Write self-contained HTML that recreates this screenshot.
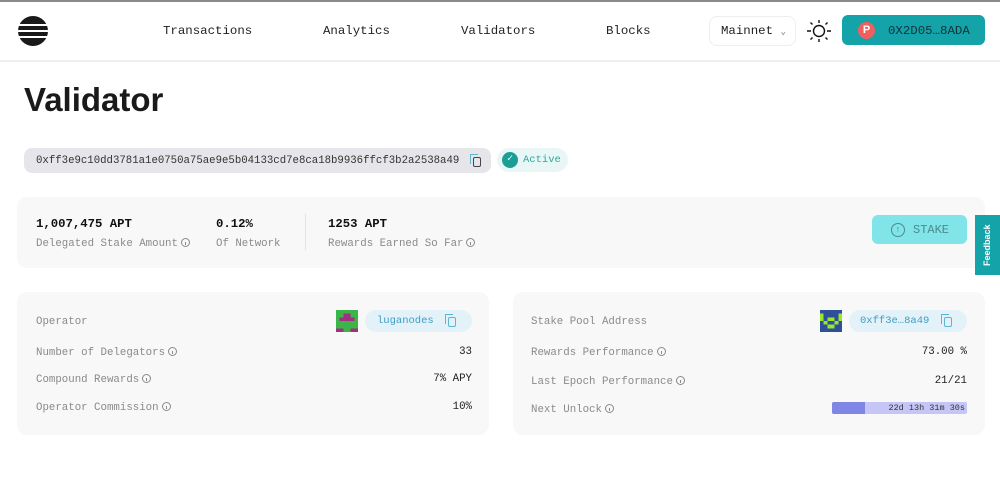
<!DOCTYPE html>
<html><head><meta charset="utf-8"><style>
*{box-sizing:border-box;margin:0;padding:0}
body{width:1000px;height:488px;background:#fff;font-family:"Liberation Mono",monospace;color:#1f1f1f;position:relative;overflow:hidden}
.abs{position:absolute}
.nav{font-size:12.4px;color:#222;top:24px}
.lbl{font-size:10.75px;color:#8a8a8a}
.val{font-size:10.75px;color:#222}
.info{display:inline-block;width:9px;height:9px;border:1px solid #8a8a8a;border-radius:50%;vertical-align:-1px;margin-left:3px;position:relative}
.info:after{content:"";position:absolute;left:3px;top:3px;width:1px;height:3px;background:#8a8a8a}
.card{background:#f8f8f8;border-radius:10px}
.copy{position:absolute;width:8px;height:10px;border:1.3px solid #5fb6d0;border-radius:2px}
.copy:before{content:"";position:absolute;left:-4px;top:-4px;width:7px;height:9px;border-left:1.3px solid #5fb6d0;border-top:1.3px solid #5fb6d0}
</style></head><body>
<div class="abs" style="left:0;top:0;width:1000px;height:2px;background:#8a8a8a"></div>
<div class="abs" style="left:0;top:60px;width:1000px;height:2px;background:#eee"></div>
<svg class="abs" style="left:17px;top:15px" width="32" height="32" viewBox="0 0 32 32"><circle cx="16" cy="16" r="15" fill="#1a1a1a"/><rect x="0" y="9" width="32" height="2" fill="#fff"/><rect x="0" y="15" width="32" height="2" fill="#fff"/><rect x="0" y="21" width="32" height="2" fill="#fff"/></svg>
<div class="abs nav" style="left:163px">Transactions</div>
<div class="abs nav" style="left:323px">Analytics</div>
<div class="abs nav" style="left:461px">Validators</div>
<div class="abs nav" style="left:606px">Blocks</div>
<div class="abs" style="left:709px;top:16px;width:87px;height:30px;border:1px solid #eee;border-radius:8px;font-size:12.4px;padding:7px 0 0 11px">Mainnet <span style="font-size:9px;color:#777">&#8964;</span></div>
<svg class="abs" style="left:806px;top:19px" width="26" height="24" viewBox="0 0 26 24" stroke="#111" stroke-width="1.4" fill="none"><circle cx="13" cy="12" r="5.5"/><path d="M13 1v3M13 20v3M1 12h4M21 12h4M4.5 3.5l2 2M19.5 18.5l2 2M4.5 20.5l2-2M19.5 5.5l2-2"/></svg>
<div class="abs" style="left:842px;top:15px;width:143px;height:30px;background:#13a3a8;border-radius:6px"></div>
<div class="abs" style="left:858px;top:22px;width:17px;height:17px;border-radius:50%;background:#f15e5e;color:#fff;font:bold 11px 'Liberation Sans';text-align:center;line-height:17px">P</div>
<div class="abs" style="left:888px;top:24px;font-size:12.4px;color:#11333a">0X2D05…8ADA</div>
<div class="abs" style="left:24px;top:81px;font:bold 33px 'Liberation Sans',sans-serif;color:#1a1a1a">Validator</div>
<div class="abs" style="left:24px;top:148px;width:467px;height:25px;background:#e6e6ea;border-radius:8px"></div>
<div class="abs" style="left:36px;top:155px;font-size:10.7px;color:#333">0xff3e9c10dd3781a1e0750a75ae9e5b04133cd7e8ca18b9936ffcf3b2a2538a49</div>
<div class="copy" style="left:473px;top:157px;border-color:#444"></div>
<div class="abs" style="left:497px;top:148px;width:71px;height:24px;background:#e8f7f6;border-radius:12px"></div>
<div class="abs" style="left:502px;top:152px;width:16px;height:16px;border-radius:50%;background:#1a9e96;color:#fff;font-size:10px;text-align:center;line-height:16px">✓</div>
<div class="abs" style="left:523px;top:154px;font-size:10.5px;color:#2aa89e">Active</div>
<div class="abs card" style="left:17px;top:197px;width:968px;height:71px"></div>
<div class="abs" style="left:36px;top:217px;font-size:12.3px;color:#111;font-weight:bold">1,007,475 APT</div>
<div class="abs lbl" style="left:36px;top:238px">Delegated Stake Amount<span class="info"></span></div>
<div class="abs" style="left:216px;top:217px;font-size:12.3px;color:#111;font-weight:bold">0.12%</div>
<div class="abs lbl" style="left:216px;top:238px">Of Network</div>
<div class="abs" style="left:305px;top:214px;width:1px;height:36px;background:#e2e2e2"></div>
<div class="abs" style="left:328px;top:217px;font-size:12.3px;color:#111;font-weight:bold">1253 APT</div>
<div class="abs lbl" style="left:328px;top:238px">Rewards Earned So Far<span class="info"></span></div>
<div class="abs" style="left:872px;top:215px;width:95px;height:29px;background:#80e4e8;border-radius:6px"></div>
<div class="abs" style="left:891px;top:223px;width:14px;height:14px;border:1.3px solid #4c8a8f;border-radius:50%;font-size:9px;color:#4c8a8f;text-align:center;line-height:12px">↑</div>
<div class="abs" style="left:913px;top:223px;font-size:12px;color:#4c8a8f">STAKE</div>
<div class="abs" style="left:975px;top:215px;width:25px;height:60px;background:#13a3a8"></div>
<div class="abs" style="left:975px;top:215px;width:25px;height:60px;color:#fff;font:bold 9px 'Liberation Sans';writing-mode:vertical-rl;transform:rotate(180deg);text-align:center;line-height:25px">Feedback</div>
<div class="abs card" style="left:17px;top:292px;width:472px;height:143px"></div>
<div class="abs lbl" style="left:36px;top:316px">Operator</div>
<svg class="abs" style="left:336px;top:310px" width="22" height="22" viewBox="0 0 6 6" shape-rendering="crispEdges"><rect width="6" height="6" fill="#3bb54a"/><rect x="2" y="1" width="2" height="1" fill="#a3307e"/><rect x="1" y="2" width="4" height="1" fill="#a3307e"/><rect x="0" y="5" width="2" height="1" fill="#a3307e"/><rect x="4" y="5" width="2" height="1" fill="#a3307e"/></svg>
<div class="abs" style="left:365px;top:310px;width:107px;height:22px;background:#e3f2f8;border-radius:11px"></div>
<div class="abs" style="left:377px;top:315px;font-size:10.5px;color:#3b9fc4">luganodes</div>
<div class="copy" style="left:448px;top:317px"></div>
<div class="abs lbl" style="left:36px;top:347px">Number of Delegators<span class="info"></span></div>
<div class="abs val" style="right:528px;top:346px">33</div>
<div class="abs lbl" style="left:36px;top:374px">Compound Rewards<span class="info"></span></div>
<div class="abs val" style="right:528px;top:373px">7% APY</div>
<div class="abs lbl" style="left:36px;top:402px">Operator Commission<span class="info"></span></div>
<div class="abs val" style="right:528px;top:401px">10%</div>
<div class="abs card" style="left:513px;top:292px;width:472px;height:143px"></div>
<div class="abs lbl" style="left:531px;top:316px">Stake Pool Address</div>
<svg class="abs" style="left:820px;top:310px" width="22" height="22" viewBox="0 0 6 6" shape-rendering="crispEdges"><rect width="6" height="6" fill="#2e4f9a"/><rect x="0" y="1" width="1" height="2" fill="#9be52a"/><rect x="5" y="1" width="1" height="2" fill="#9be52a"/><rect x="2" y="2" width="2" height="1" fill="#9be52a"/><rect x="1" y="3" width="1" height="1" fill="#9be52a"/><rect x="4" y="3" width="1" height="1" fill="#9be52a"/><rect x="2" y="4" width="2" height="1" fill="#9be52a"/></svg>
<div class="abs" style="left:849px;top:310px;width:118px;height:22px;background:#e3f2f8;border-radius:11px"></div>
<div class="abs" style="left:860px;top:315px;font-size:10.5px;color:#3b9fc4">0xff3e…8a49</div>
<div class="copy" style="left:944px;top:317px"></div>
<div class="abs lbl" style="left:531px;top:347px">Rewards Performance<span class="info"></span></div>
<div class="abs val" style="right:33px;top:346px">73.00 %</div>
<div class="abs lbl" style="left:531px;top:376px">Last Epoch Performance<span class="info"></span></div>
<div class="abs val" style="right:33px;top:375px">21/21</div>
<div class="abs lbl" style="left:531px;top:404px">Next Unlock<span class="info"></span></div>
<div class="abs" style="left:832px;top:402px;width:135px;height:12px;background:#c5c6f5;border-radius:2px"></div>
<div class="abs" style="left:832px;top:402px;width:33px;height:12px;background:#7f86e6;border-radius:2px 0 0 2px"></div>
<div class="abs" style="right:35px;top:403px;font-size:8.5px;color:#333">22d 13h 31m 30s</div>
</body></html>
